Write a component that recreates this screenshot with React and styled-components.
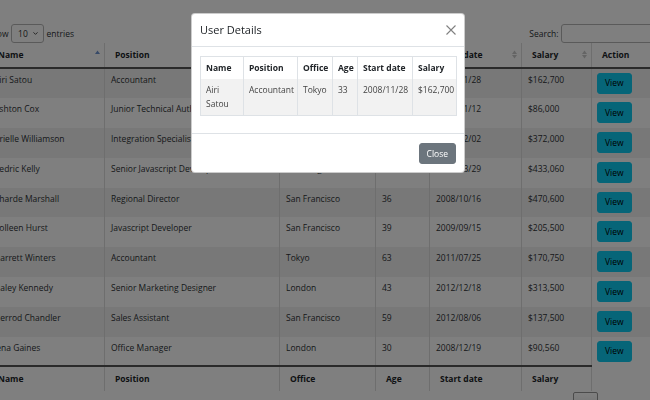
import React from 'react'
import styled, {createGlobalStyle} from 'styled-components'
import {ChevronDown} from 'lucide-react'

const users = [
  ['Airi Satou', 'Accountant', 'Tokyo', '33', '2008/11/28', '$162,700'],
  ['Ashton Cox', 'Junior Technical Author', 'San Francisco', '66', '2009/01/12', '$86,000'],
  ['Brielle Williamson', 'Integration Specialist', 'New York', '61', '2012/12/02', '$372,000'],
  ['Cedric Kelly', 'Senior Javascript Developer', 'Edinburgh', '22', '2012/03/29', '$433,060'],
  ['Charde Marshall', 'Regional Director', 'San Francisco', '36', '2008/10/16', '$470,600'],
  ['Colleen Hurst', 'Javascript Developer', 'San Francisco', '39', '2009/09/15', '$205,500'],
  ['Garrett Winters', 'Accountant', 'Tokyo', '63', '2011/07/25', '$170,750'],
  ['Haley Kennedy', 'Senior Marketing Designer', 'London', '43', '2012/12/18', '$313,500'],
  ['Herrod Chandler', 'Sales Assistant', 'San Francisco', '59', '2012/08/06', '$137,500'],
  ['Jena Gaines', 'Office Manager', 'London', '30', '2008/12/19', '$90,560'],
]

const columns = ['Name', 'Position', 'Office', 'Age', 'Start date', 'Salary']
const widths = [117, 175, 96, 54, 92, 70, 182]
const modalWidths = [43, 54, 35, 25, 55, 44]

function SortIcon({asc}) {
  return (
    <svg width="5" height="9" viewBox="0 0 5 9">
      <path d="M0 4 L2.5 0.5 L5 4 Z" fill={asc ? '#6f94d0' : '#c9c9c9'} />
      {!asc && <path d="M0 5 L5 5 L2.5 8.5 Z" fill="#c9c9c9" />}
    </svg>
  )
}

export default class App extends React.PureComponent {
  render() {
    const selected = users[0]
    return (
      <>
        <GlobalStyle />
        <Page>
          <TopBar>
            <Label>
              Show
              <FakeSelect>
                10
                <ChevronDown size={7} strokeWidth={3} />
              </FakeSelect>
              entries
            </Label>
            <Label>
              Search:
              <SearchInput type="search" />
            </Label>
          </TopBar>

          <Table>
            <colgroup>
              {widths.map((w, i) => <col key={i} style={{width: w}} />)}
            </colgroup>
            <thead>
              <tr>
                {columns.map((c, i) =>
                  <HeadCell key={c}>
                    <HeadInner>
                      {c}
                      <SortIcon asc={i === 0} />
                    </HeadInner>
                  </HeadCell>
                )}
                <HeadCell>Action</HeadCell>
              </tr>
            </thead>
            <tbody>
              {users.map(u =>
                <Row key={u[0]}>
                  {u.map((v, i) => <Cell key={i}>{v}</Cell>)}
                  <ActionCell>
                    <ViewButton>View</ViewButton>
                  </ActionCell>
                </Row>
              )}
            </tbody>
            <tfoot>
              <tr>
                {columns.map(c => <FootCell key={c}>{c}</FootCell>)}
              </tr>
            </tfoot>
          </Table>

          <BottomBar>
            <Info>Showing 1 to 10 of 57 entries</Info>
            <Pagination>
              <PageButton>Previous</PageButton>
              <PageButton current>1</PageButton>
              <PageButton>2</PageButton>
              <PageButton>3</PageButton>
              <PageButton>4</PageButton>
              <PageButton>5</PageButton>
              <PageButton>6</PageButton>
              <PageButton>Next</PageButton>
            </Pagination>
          </BottomBar>
        </Page>

        <Backdrop />
        <ModalLayer>
          <Dialog>
            <ModalHeader>
              <ModalTitle>User Details</ModalTitle>
              <CloseX aria-label="Close">
                <svg width="10" height="10" viewBox="0 0 10 10">
                  <path d="M0.5 0.5 L9.5 9.5 M9.5 0.5 L0.5 9.5" stroke="#808080" strokeWidth="1.1" />
                </svg>
              </CloseX>
            </ModalHeader>
            <ModalBody>
              <DetailTable>
                <colgroup>
                  {modalWidths.map((w, i) => <col key={i} style={{width: w}} />)}
                </colgroup>
                <thead>
                  <tr>{columns.map(c => <DetailHead key={c}>{c}</DetailHead>)}</tr>
                </thead>
                <tbody>
                  <DetailRow>
                    {selected.map((v, i) => <DetailCell key={i}>{v}</DetailCell>)}
                  </DetailRow>
                </tbody>
              </DetailTable>
            </ModalBody>
            <ModalFooter>
              <CloseButton>Close</CloseButton>
            </ModalFooter>
          </Dialog>
        </ModalLayer>
      </>
    )
  }
}

const GlobalStyle = createGlobalStyle`
  html, body {
    margin: 0;
    overflow: hidden;
    background: #fff;
  }
  body {
    font-family: 'Open Sans', 'Noto Sans', sans-serif;
    font-size: 8.5px;
    line-height: 13.5px;
    color: #2e3236;
  }
`
const Page = styled.div`
  width: 786px;
  margin-left: -13px;
  padding-top: 24px;
`
const TopBar = styled.div`
  display: flex;
  justify-content: space-between;
  align-items: center;
  height: 19px;
`
const Label = styled.label`
  display: flex;
  align-items: center;
  gap: 2.5px;
  white-space: nowrap;
`
const FakeSelect = styled.span`
  display: inline-flex;
  align-items: center;
  justify-content: space-between;
  box-sizing: border-box;
  width: 33px;
  height: 19px;
  padding: 0 4px 0 6px;
  border: 1px solid #b5b5b5;
  border-radius: 3px;
  background: #fff;
  svg {
    color: #333;
  }
`
const SearchInput = styled.input`
  box-sizing: border-box;
  width: 212px;
  height: 19px;
  margin: 0;
  border: 1px solid #b5b5b5;
  border-radius: 3px;
  background: #fff;
`
const Table = styled.table`
  width: 786px;
  table-layout: fixed;
  border-collapse: collapse;
  margin-top: 0;
`
const HeadCell = styled.th`
  padding: 5px 4px 5px 10px;
  text-align: left;
  font-weight: 700;
  color: #212529;
  border-left: 1px solid #dcdcdc;
  border-right: 1px solid #dcdcdc;
  border-bottom: 2px solid #555;
  white-space: nowrap;
`
const HeadInner = styled.span`
  display: flex;
  justify-content: space-between;
  align-items: center;
`
const Row = styled.tr`
  &:nth-child(odd) {
    background: #f0f0f0;
  }
`
const Cell = styled.td`
  padding: 4px 6px 4.8px;
  vertical-align: top;
  border-left: 1px solid #dcdcdc;
  border-right: 1px solid #dcdcdc;
  white-space: nowrap;
  overflow: hidden;
`
const ActionCell = styled(Cell)`
  padding-left: 5px;
`
const ViewButton = styled.button`
  display: block;
  height: 21px;
  padding: 0 7px;
  border: 1px solid #0dcaf0;
  border-radius: 3px;
  background: #0dcaf0;
  color: #000;
  font: inherit;
`
const FootCell = styled.th`
  padding: 5px 10px;
  text-align: left;
  font-weight: 700;
  color: #212529;
  border-top: 2px solid #555;
  border-left: 1px solid #dcdcdc;
  border-right: 1px solid #dcdcdc;
`
const BottomBar = styled.div`
  display: flex;
  justify-content: space-between;
  margin-top: 1px;
`
const Info = styled.div`
  padding-top: 12px;
`
const Pagination = styled.div`
  display: flex;
`
const PageButton = styled.span`
  box-sizing: border-box;
  min-width: 24px;
  margin-left: 2px;
  padding: 4px 9px;
  text-align: center;
  border: 1px solid ${p => p.current ? '#979797' : 'transparent'};
  border-radius: 2px;
  background: ${p => p.current ? 'linear-gradient(#fff, #dcdcdc)' : 'none'};
`
const Backdrop = styled.div`
  position: fixed;
  inset: 0;
  background: rgba(0, 0, 0, 0.5);
`
const ModalLayer = styled.div`
  position: fixed;
  inset: 0;
`
const Dialog = styled.div`
  width: 274px;
  margin: 13px 0 0 191px;
  box-sizing: border-box;
  background: #fff;
  border: 1px solid rgba(0, 0, 0, 0.2);
  border-radius: 4px;
`
const ModalHeader = styled.div`
  display: flex;
  justify-content: space-between;
  align-items: center;
  padding: 7px 8px;
  border-bottom: 1px solid #dee2e6;
`
const ModalTitle = styled.h5`
  margin: 0;
  font-size: 11px;
  font-weight: 500;
  line-height: 18px;
  color: #212529;
`
const CloseX = styled.button`
  display: flex;
  padding: 0;
  border: 0;
  background: none;
`
const ModalBody = styled.div`
  padding: 9px 8px;
`
const DetailTable = styled.table`
  width: 100%;
  table-layout: fixed;
  border-collapse: collapse;
  margin-bottom: 8px;
  border: 1px solid #dee2e6;
`
const DetailHead = styled.th`
  padding: 4px 5px;
  text-align: left;
  font-weight: 700;
  line-height: 14px;
  color: #212529;
  border: 1px solid #dee2e6;
  border-bottom-width: 0;
  white-space: nowrap;
`
const DetailRow = styled.tr`
  background: #f2f2f2;
`
const DetailCell = styled.td`
  padding: 4px 5px;
  vertical-align: top;
  line-height: 14px;
  color: #444;
  border: 1px solid #dee2e6;
  border-top-width: 0;
`
const ModalFooter = styled.div`
  display: flex;
  justify-content: flex-end;
  padding: 9px 8px 8px;
  border-top: 1px solid #dee2e6;
`
const CloseButton = styled.button`
  height: 21px;
  padding: 0 7px;
  border: 1px solid #6c757d;
  border-radius: 3px;
  background: #6c757d;
  color: #fff;
  font: inherit;
`
